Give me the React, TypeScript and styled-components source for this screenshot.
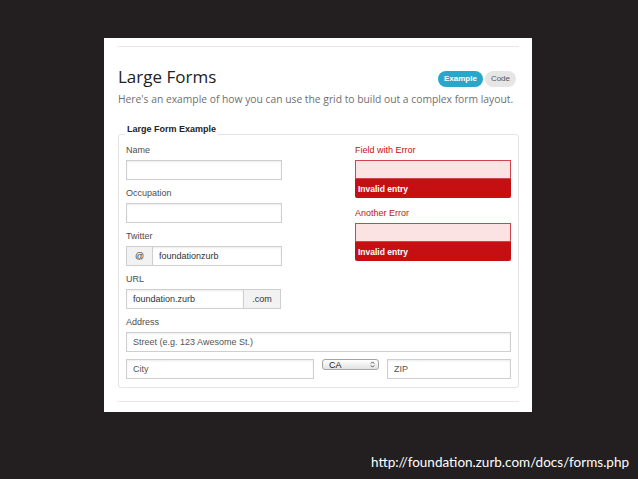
import React from 'react';
import styled, { createGlobalStyle } from 'styled-components';

const GlobalStyle = createGlobalStyle`
  html, body {
    margin: 0;
    padding: 0;
    background: #231f20;
  }
`;

const Page = styled.div`
  width: 638px;
  height: 479px;
  box-sizing: border-box;
  padding-top: 38px;
  background: #231f20;
  display: flex;
  flex-direction: column;
  overflow: hidden;
`;

const Panel = styled.section`
  width: 428px;
  height: 374px;
  margin-left: 104px;
  box-sizing: border-box;
  padding: 8px 13px 0 14px;
  background: #fff;
  display: flex;
  flex-direction: column;
`;

const Rule = styled.hr<{ $top?: number }>`
  margin: ${(p) => p.$top ?? 0}px 0 0;
  border: 0;
  border-top: 1px solid #e8e8e8;
`;

const Header = styled.div`
  display: flex;
  justify-content: space-between;
  align-items: center;
  margin-top: 20px;
`;

const Title = styled.h1`
  margin: 0;
  font-family: 'Open Sans', sans-serif;
  font-weight: 400;
  font-size: 17px;
  line-height: 20px;
  color: #222;
`;

const Tabs = styled.div`
  display: flex;
  gap: 2px;
  margin: 3px 3px 0 0;
`;

const Tab = styled.span<{ $active?: boolean }>`
  display: flex;
  align-items: center;
  justify-content: center;
  height: 16px;
  padding: 0 6px;
  border-radius: 8px;
  font-family: 'Liberation Sans', Arial, sans-serif;
  font-size: 8px;
  font-weight: ${(p) => (p.$active ? 700 : 400)};
  background: ${(p) => (p.$active ? '#2ba6cb' : '#e6e6e6')};
  color: ${(p) => (p.$active ? '#fff' : '#555')};
`;

const Lead = styled.p`
  margin: 5px 0 0;
  font-family: 'Open Sans', sans-serif;
  font-size: 10.3px;
  line-height: 14px;
  color: #6f6f6f;
  white-space: nowrap;
`;

const Fieldset = styled.fieldset`
  margin: 18px 0 0;
  padding: 0 7px 8px;
  border: 1px solid #e4e4e4;
  border-radius: 3px;
  font-family: 'Liberation Sans', Arial, sans-serif;
`;

const Legend = styled.legend`
  margin-left: -1px;
  padding: 0 2px 10px;
  font-size: 9px;
  font-weight: 700;
  line-height: 11px;
  color: #222;
`;

const Columns = styled.div`
  display: grid;
  grid-template-columns: 156px 156px;
  column-gap: 73px;
`;

const Label = styled.label<{ $error?: boolean }>`
  display: block;
  margin-bottom: 4px;
  font-size: 9px;
  line-height: 11px;
  color: ${(p) => (p.$error ? '#c60f13' : '#4d4d4d')};
`;

const TextInput = styled.input`
  display: block;
  width: 100%;
  height: 20px;
  margin: 0 0 8px;
  box-sizing: border-box;
  padding: 0 6px;
  border: 1px solid #cfcfcf;
  border-radius: 0;
  background: #fff;
  box-shadow: inset 0 1px 2px rgba(0, 0, 0, 0.08);
  font-family: 'Liberation Sans', Arial, sans-serif;
  font-size: 9px;
  color: #333;
  outline: none;

  &::placeholder {
    color: #555;
  }
`;

const Group = styled.div`
  display: flex;
  height: 20px;
  margin-bottom: 8px;
`;

const GroupInput = styled(TextInput)<{ $addon: 'left' | 'right' }>`
  flex: 1;
  min-width: 0;
  height: 20px;
  margin: 0;
  border-left-width: ${(p) => (p.$addon === 'left' ? 0 : 1)}px;
  border-right-width: ${(p) => (p.$addon === 'right' ? 0 : 1)}px;
`;

const Addon = styled.span<{ $width: number }>`
  flex: 0 0 ${(p) => p.$width}px;
  display: flex;
  align-items: center;
  justify-content: center;
  box-sizing: border-box;
  border: 1px solid #cfcfcf;
  background: #f2f2f2;
  font-size: 9px;
  color: #333;
`;

const ErrorInput = styled(TextInput)`
  height: 19px;
  margin: 0;
  border-color: #d0454a;
  background: #fbe3e4;
  box-shadow: none;
`;

const ErrorMessage = styled.div`
  height: 19px;
  margin-bottom: 10px;
  padding: 0 3px;
  border-radius: 0 0 2px 2px;
  background: #c60f13;
  font-size: 8.5px;
  font-weight: 700;
  line-height: 20px;
  color: #fff;
`;

const Street = styled(TextInput)`
  margin-bottom: 7px;
`;

const AddressRow = styled.div`
  display: grid;
  grid-template-columns: 188px 57px 124px;
  column-gap: 8px;
  align-items: start;

  ${TextInput} {
    margin: 0;
  }
`;

const SelectBox = styled.div`
  display: flex;
  align-items: center;
  justify-content: space-between;
  height: 11px;
  box-sizing: border-box;
  padding: 0 3px 0 6px;
  border: 1px solid #a5a5a5;
  border-radius: 3px;
  background: linear-gradient(#ffffff, #e2e2e2);
  font-size: 9px;
  color: #222;
`;

const Caption = styled.p`
  margin: 42px 0 0;
  padding-right: 9px;
  text-align: right;
  font-family: Lato, 'Open Sans', sans-serif;
  font-size: 13.5px;
  line-height: 16px;
  color: #fff;
`;

const Arrows = () => (
  <svg width="5" height="7" viewBox="0 0 5 7" fill="none" stroke="#444" strokeWidth="0.9">
    <path d="M0.8 2.6 L2.5 0.9 L4.2 2.6" />
    <path d="M0.8 4.4 L2.5 6.1 L4.2 4.4" />
  </svg>
);

const errorFields = ['Field with Error', 'Another Error'];

const App: React.FC = () => {
  return (
    <>
      <GlobalStyle />
      <Page>
        <Panel>
          <Rule />
          <Header>
            <Title>Large Forms</Title>
            <Tabs>
              <Tab $active>Example</Tab>
              <Tab>Code</Tab>
            </Tabs>
          </Header>
          <Lead>Here's an example of how you can use the grid to build out a complex form layout.</Lead>

          <Fieldset>
            <Legend>Large Form Example</Legend>
            <Columns>
              <div>
                <Label>Name</Label>
                <TextInput type="text" />
                <Label>Occupation</Label>
                <TextInput type="text" />
                <Label>Twitter</Label>
                <Group>
                  <Addon $width={27}>@</Addon>
                  <GroupInput $addon="left" type="text" defaultValue="foundationzurb" />
                </Group>
                <Label>URL</Label>
                <Group style={{ width: 155 }}>
                  <GroupInput $addon="right" type="text" defaultValue="foundation.zurb" />
                  <Addon $width={38}>.com</Addon>
                </Group>
              </div>
              <div>
                {errorFields.map((name) => (
                  <div key={name}>
                    <Label $error>{name}</Label>
                    <ErrorInput type="text" />
                    <ErrorMessage>Invalid entry</ErrorMessage>
                  </div>
                ))}
              </div>
            </Columns>
            <Label>Address</Label>
            <Street type="text" placeholder="Street (e.g. 123 Awesome St.)" />
            <AddressRow>
              <TextInput type="text" placeholder="City" />
              <SelectBox>
                <span>CA</span>
                <Arrows />
              </SelectBox>
              <TextInput type="text" placeholder="ZIP" />
            </AddressRow>
          </Fieldset>
          <Rule $top={13} />
        </Panel>
        <Caption>http://foundation.zurb.com/docs/forms.php</Caption>
      </Page>
    </>
  );
};

export default App;
